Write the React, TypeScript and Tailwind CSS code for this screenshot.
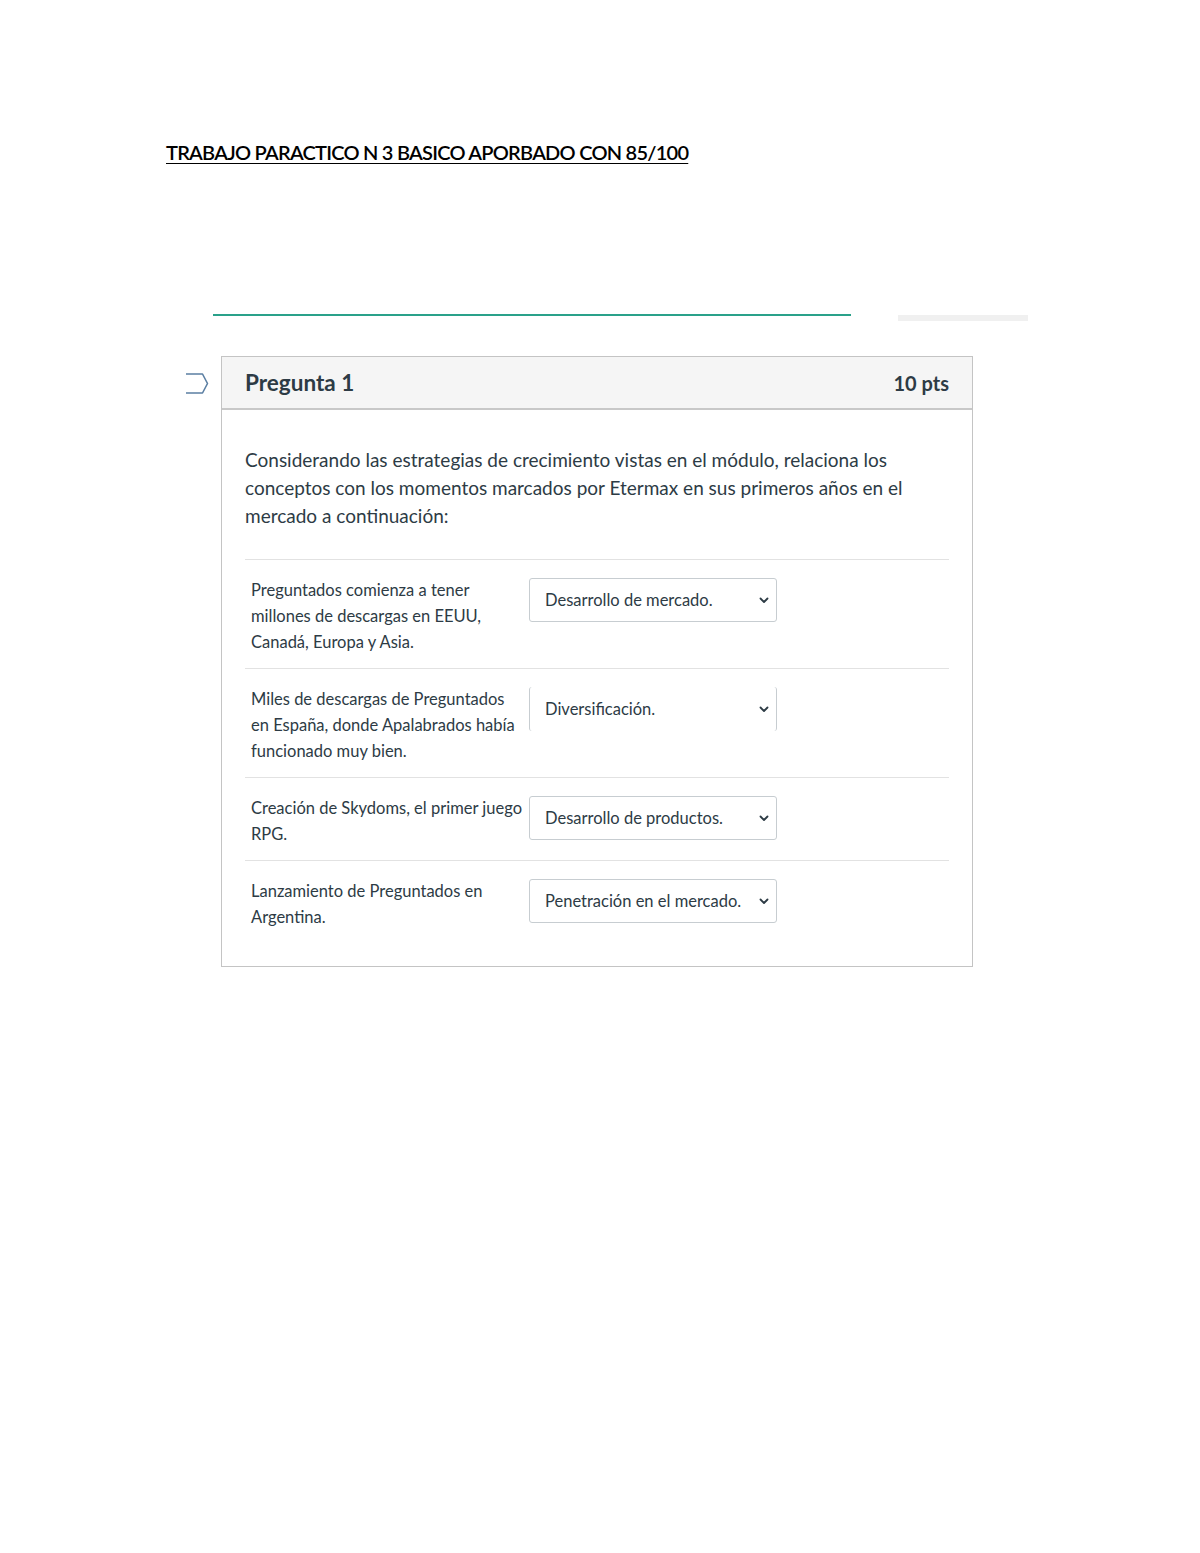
import React from "react";

const rows: { lines: string[]; value: string; partial?: boolean }[] = [
  {
    lines: ["Preguntados comienza a tener", "millones de descargas en EEUU,", "Canadá, Europa y Asia."],
    value: "Desarrollo de mercado.",
  },
  {
    lines: ["Miles de descargas de Preguntados", "en España, donde Apalabrados había", "funcionado muy bien."],
    value: "Diversificación.",
    partial: true,
  },
  {
    lines: ["Creación de Skydoms, el primer juego", "RPG."],
    value: "Desarrollo de productos.",
  },
  {
    lines: ["Lanzamiento de Preguntados en", "Argentina."],
    value: "Penetración en el mercado.",
  },
];

function Chevron() {
  return (
    <svg width="12" height="12" viewBox="0 0 12 12" className="shrink-0">
      <path d="M2.5 4.5 L6 8 L9.5 4.5" fill="none" stroke="#2d3b45" strokeWidth="1.8" strokeLinecap="round" strokeLinejoin="round" />
    </svg>
  );
}

export default function App() {
  return (
    <div className="min-h-[1553px] w-[1200px] bg-white" style={{ fontFamily: "Lato, 'Open Sans', sans-serif" }}>
      <div className="pl-[166px] pt-[140px]">
        <h1 className="text-[20px] font-semibold leading-[24px] text-black underline underline-offset-[3px] decoration-1 tracking-[-0.75px]">
          TRABAJO PARACTICO N 3 BASICO APORBADO CON 85/100
        </h1>
      </div>

      <div className="mt-[150px] flex items-start">
        <div className="ml-[213px] h-[2px] w-[638px] bg-[#2aa18a]" />
        <div className="ml-[47px] mt-[1px] h-[6px] w-[130px] bg-[#f0f0f0]" />
      </div>

      <div className="mt-[35px] flex items-start">
        <div className="ml-[186px] mt-[17px] w-[35px]">
          <svg width="23" height="21" viewBox="0 0 23 21">
            <path d="M0 1 H16.5 L21.5 10.5 L16.5 20 H0" fill="none" stroke="#5b7fa3" strokeWidth="1.6" strokeLinejoin="round" />
          </svg>
        </div>
        <div className="w-[752px] border border-[#c4c4c4] text-[#2d3b45]">
          <div className="flex h-[53px] items-center justify-between border-b-2 border-[#c8c8c8] bg-[#f5f5f5] px-[23px]">
            <span className="text-[22.5px] font-bold">Pregunta 1</span>
            <span className="text-[20px] font-bold">10 pts</span>
          </div>
          <div className="px-[23px] pb-[23px] pt-[36px]">
            <p className="text-[19px] leading-[28px]">
              Considerando las estrategias de crecimiento vistas en el módulo, relaciona los
              <br />
              conceptos con los momentos marcados por Etermax en sus primeros años en el
              <br />
              mercado a continuación:
            </p>
            <div className="mt-[29px]">
              {rows.map((r, i) => (
                <div key={i} className="flex items-start border-t border-[#e2e2e2] pb-[13px] pl-[6px] pt-[17px]">
                  <div className="w-[278px] text-[16.5px] leading-[26px]">
                    {r.lines.map((l, j) => (
                      <div key={j} className="whitespace-nowrap">
                        {l}
                      </div>
                    ))}
                  </div>
                  <div
                    className={
                      "mt-[1px] flex h-[44px] w-[248px] items-center justify-between rounded-[3px] pl-[15px] pr-[6px] text-[16.5px] " +
                      (r.partial ? "border-x border-[#c7cdd1]" : "border border-[#c7cdd1]")
                    }
                  >
                    <span className="whitespace-nowrap">{r.value}</span>
                    <Chevron />
                  </div>
                </div>
              ))}
            </div>
          </div>
        </div>
      </div>
    </div>
  );
}
